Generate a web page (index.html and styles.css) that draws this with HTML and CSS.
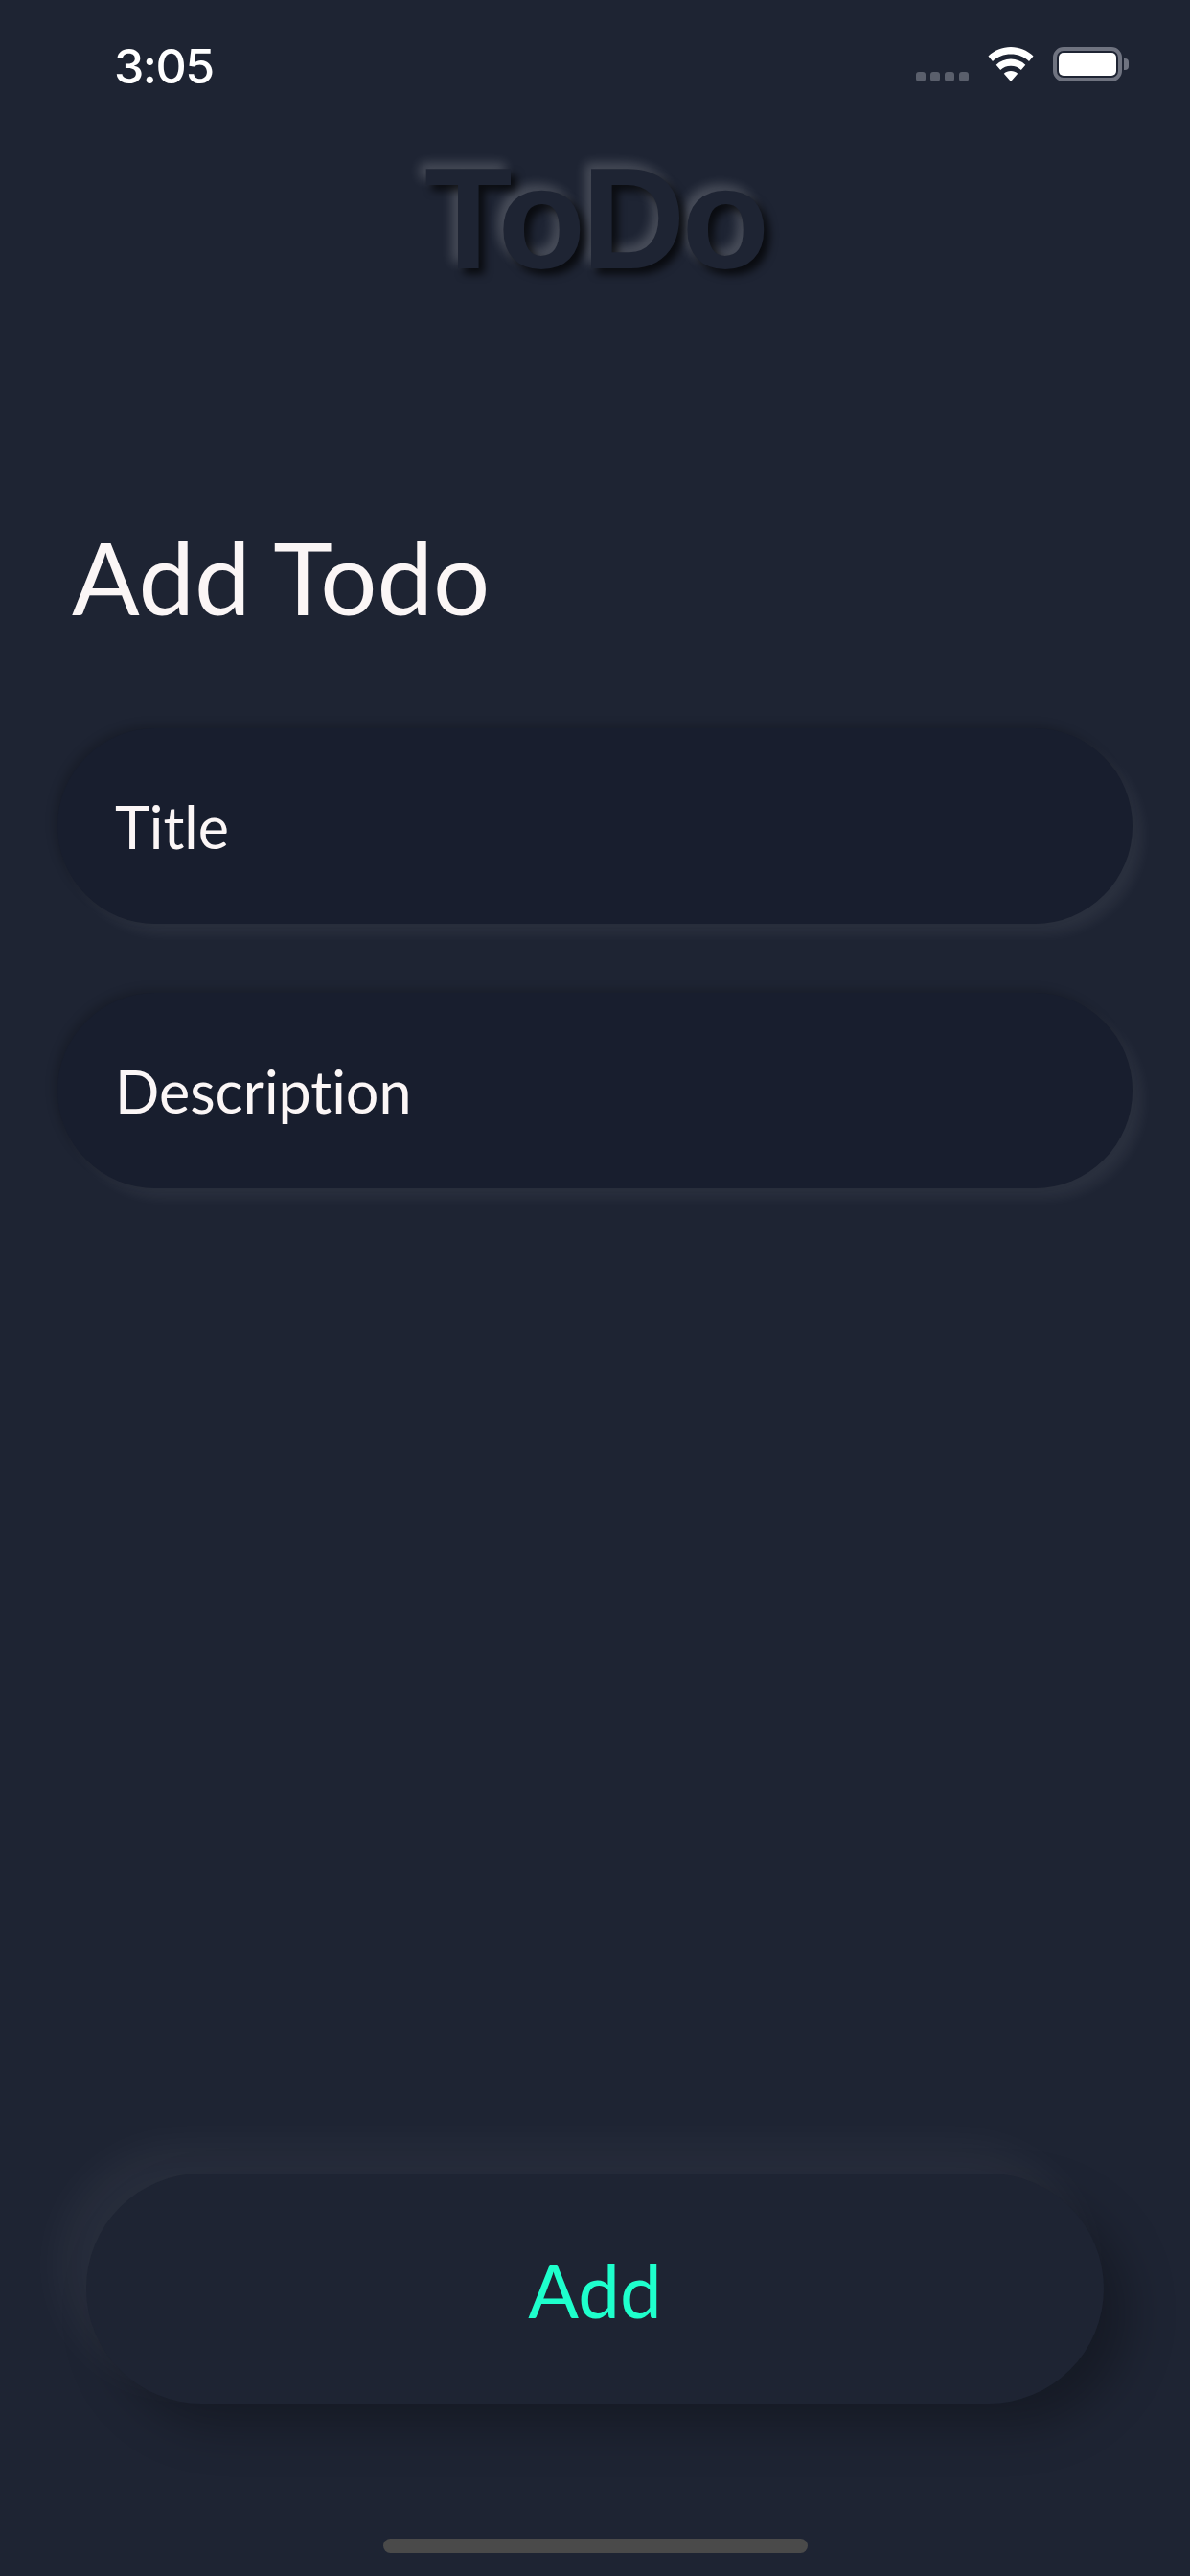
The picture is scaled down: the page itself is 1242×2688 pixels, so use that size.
FILE: index.html
```html
<!DOCTYPE html>
<html lang="en">
<head>
    <meta charset="UTF-8">
    <meta name="viewport" content="width=device-width, initial-scale=1.0">
    <title>ToDo</title>
    <link rel="stylesheet" href="styles.css">
</head>
<body>
    <div class="status-bar">
        <span class="time">3:05</span>
        <div class="status-icons">
            <div class="signal">
                <span class="dot"></span>
                <span class="dot"></span>
                <span class="dot"></span>
                <span class="dot"></span>
            </div>
            <svg class="wifi" width="48" height="36" viewBox="0 0 48 36">
                <path fill="#fff" d="M24 0C15 0 7 3.500 0.500 9.500L5 15C10 10 16.500 7.500 24 7.500S38 10 43 15L47.500 9.500C41 3.500 33 0 24 0Z"/>
                <path fill="#fff" d="M24 12.500C18 12.500 12.800 14.800 8.700 18.700L13.200 24C16 21.300 19.800 19.800 24 19.800S32 21.300 34.800 24L39.300 18.700C35.200 14.800 30 12.500 24 12.500Z"/>
                <path fill="#fff" d="M24 25C21.300 25 18.800 26 16.800 27.700L24 36L31.200 27.700C29.200 26 26.700 25 24 25Z"/>
            </svg>
            <div class="battery">
                <div class="battery-body"><div class="battery-level"></div></div>
                <div class="battery-cap"></div>
            </div>
        </div>
    </div>

    <h1 class="logo">ToDo</h1>

    <h2 class="page-title">Add Todo</h2>

    <div class="field"><span>Title</span></div>
    <div class="field"><span>Description</span></div>

    <div class="spacer"></div>

    <div class="add-btn">Add</div>

    <div class="home-bar"></div>
</body>
</html>
```

FILE: styles.css
```css
* {
    box-sizing: border-box;
}
html, body {
    margin: 0;
    padding: 0;
}
body {
    width: 1242px;
    height: 2688px;
    display: flex;
    flex-direction: column;
    overflow: hidden;
    background-color: #1e2433;
    font-family: Lato, "Liberation Sans", sans-serif;
    font-variant-ligatures: none;
    color: #fbf6f6;
}
.status-bar {
    display: flex;
    justify-content: space-between;
    align-items: flex-start;
    height: 163px;
    padding: 49px 64px 0 119px;
}
.time {
    margin-top: 2px;
    font-family: Inter, "Liberation Sans", sans-serif;
    font-size: 50px;
    font-weight: 500;
    line-height: 36px;
    letter-spacing: -1.5px;
    color: #fff;
}
.status-icons {
    display: flex;
    align-items: flex-start;
}
.signal {
    display: flex;
    gap: 5px;
    margin-top: 26px;
    margin-right: 20px;
}
.dot {
    width: 10px;
    height: 10px;
    border-radius: 3px;
    background: #5a5f6c;
}
.wifi {
    display: block;
    margin-right: 20px;
}
.battery {
    display: flex;
    align-items: center;
}
.battery-body {
    width: 72px;
    height: 36px;
    padding: 2px;
    border: 4px solid #6f7380;
    border-radius: 11px;
}
.battery-level {
    height: 100%;
    border-radius: 5px;
    background: #fff;
}
.battery-cap {
    width: 5px;
    height: 12px;
    margin-left: 2px;
    border-radius: 0 4px 4px 0;
    background: #6f7380;
}
.logo {
    margin: 0;
    height: 130px;
    text-align: center;
    font-family: "Liberation Sans", Arial, sans-serif;
    font-size: 150px;
    font-weight: 700;
    line-height: 130px;
    letter-spacing: -4px;
    color: #1e2433;
    text-shadow: 6px 6px 8px rgba(0, 0, 0, 0.7), -6px -6px 12px rgba(255, 255, 255, 0.2);
}
.page-title {
    margin: 249px 0 0 75px;
    height: 120px;
    font-size: 104.500px;
    font-weight: 400;
    line-height: 120px;
}
.field {
    display: flex;
    align-items: center;
    height: 204px;
    margin: 0 60px 72px;
    padding: 0 60px;
    border-radius: 102px;
    background: #181e2e;
    box-shadow: -4px -4px 10px rgba(0, 0, 0, 0.18), 10px 10px 14px rgba(255, 255, 255, 0.06);
    font-size: 61px;
}
.page-title + .field {
    margin-top: 98px;
}
.spacer {
    flex: 1;
}
.add-btn {
    display: flex;
    align-items: center;
    justify-content: center;
    height: 240px;
    margin: 0 90px;
    padding-top: 2px;
    border-radius: 120px;
    background: #1e2433;
    box-shadow: -25px -25px 50px rgba(255, 255, 255, 0.05), 25px 25px 50px rgba(0, 0, 0, 0.28);
    color: #1effcc;
    font-size: 78px;
}
.home-bar {
    width: 443px;
    height: 15px;
    margin: 141px auto 24px;
    border-radius: 8px;
    background: #4a4a4a;
}
```
